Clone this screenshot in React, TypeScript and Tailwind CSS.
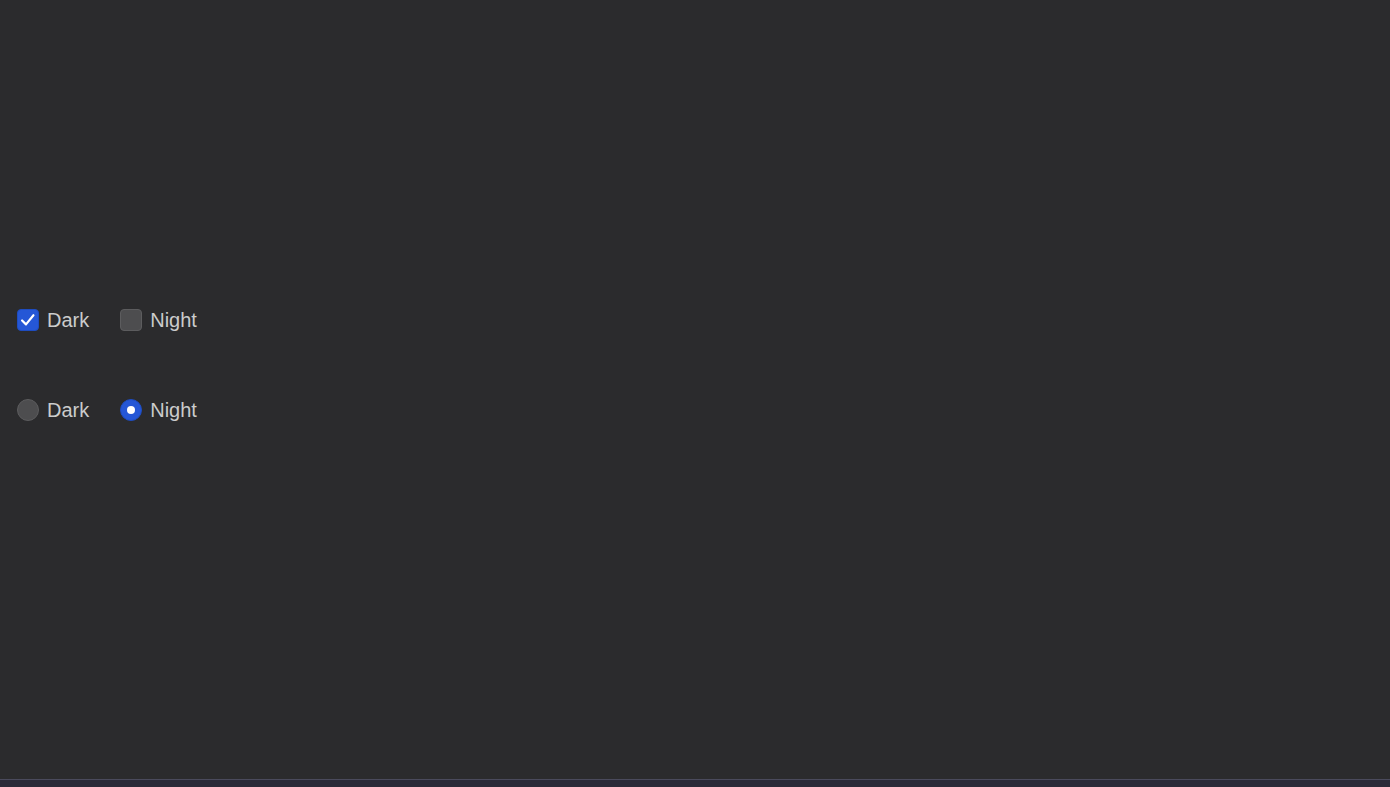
import React from "react";

function Check({ checked }: { checked: boolean }) {
  return checked ? (
    <span className="flex h-[22px] w-[22px] items-center justify-center rounded-[4px] border border-[#1e4cc0] bg-[#2557d6]">
      <svg width="22" height="22" viewBox="0 0 22 22" fill="none">
        <path d="M4.5 11.5 L8.8 15.8 L17 5.8" stroke="#ffffff" strokeWidth="2.4" strokeLinecap="round" strokeLinejoin="round" />
      </svg>
    </span>
  ) : (
    <span className="h-[22px] w-[22px] rounded-[4px] border border-[#5c5c5e] bg-[#4d4d4f]" />
  );
}

function Radio({ checked }: { checked: boolean }) {
  return checked ? (
    <span className="flex h-[22px] w-[22px] items-center justify-center rounded-full border border-[#1e4cc0] bg-[#2557d6]">
      <span className="h-[8px] w-[8px] rounded-full bg-white" />
    </span>
  ) : (
    <span className="h-[22px] w-[22px] rounded-full border border-[#5c5c5e] bg-[#4d4d4f]" />
  );
}

function Item({ kind, checked, label }: { kind: "check" | "radio"; checked: boolean; label: string }) {
  return (
    <label className="flex items-center gap-[8px]">
      {kind === "check" ? <Check checked={checked} /> : <Radio checked={checked} />}
      <span className="text-[20px] leading-[22px] text-[#cccccc]">{label}</span>
    </label>
  );
}

export default function App() {
  return (
    <div
      className="flex h-[787px] w-full flex-col bg-[#2b2b2d]"
      style={{ fontFamily: '"Liberation Sans", Arial, sans-serif' }}
    >
      <div className="flex flex-1 flex-col gap-[68px] pl-[17px] pt-[309px]">
        <div className="flex items-center gap-[31px]">
          <Item kind="check" checked={true} label="Dark" />
          <Item kind="check" checked={false} label="Night" />
        </div>
        <div className="flex items-center gap-[31px]">
          <Item kind="radio" checked={false} label="Dark" />
          <Item kind="radio" checked={true} label="Night" />
        </div>
      </div>
      <div className="h-[8px] border-t border-[#4a4a5c] bg-[#2a2a38]" />
    </div>
  );
}
